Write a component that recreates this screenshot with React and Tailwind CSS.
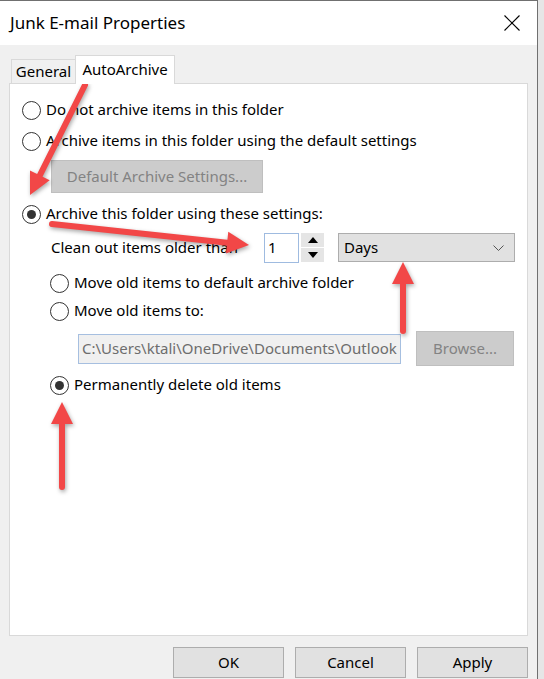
function Radio({ checked, label }) {
  return (
    <div className="flex items-center h-[20px]">
      <div className="w-[19px] h-[19px] rounded-full border border-[#333333] bg-white flex items-center justify-center shrink-0">
        {checked && <div className="w-[9px] h-[9px] rounded-full bg-[#333333]" />}
      </div>
      <span className="ml-[5px] leading-none whitespace-nowrap -mt-[2px]">{label}</span>
    </div>
  );
}

function Arrow({ x1, y1, x2, y2 }) {
  const dx = x2 - x1;
  const dy = y2 - y1;
  const len = Math.sqrt(dx * dx + dy * dy);
  const ux = dx / len;
  const uy = dy / len;
  const bx = x2 - ux * 22;
  const by = y2 - uy * 22;
  const px = -uy;
  const py = ux;
  const pts = `${x2},${y2} ${bx + px * 11},${by + py * 11} ${bx - px * 11},${by - py * 11}`;
  return (
    <g>
      <line x1={x1} y1={y1} x2={bx} y2={by} stroke="#f24747" strokeWidth="6" strokeLinecap="round" />
      <polygon points={pts} fill="#f24747" />
    </g>
  );
}

export default function App() {
  return (
    <div className="relative w-[544px] h-[679px] overflow-hidden bg-[#e6e6e6] font-['Segoe_UI','Noto_Sans',sans-serif] text-[15px] text-black">
      <div className="w-[538px] h-[680px] border-t border-r border-[#707070] bg-[#f0f0f0] flex flex-col">
        {/* title bar */}
        <div className="h-[44px] bg-white flex items-center justify-between pl-[10px] pr-[17px] shrink-0">
          <span className="text-[17px]">Junk E-mail Properties</span>
          <svg width="16" height="16" viewBox="0 0 16 16">
            <line x1="0.5" y1="0.5" x2="15.5" y2="15.5" stroke="#000" strokeWidth="1.1" />
            <line x1="15.5" y1="0.5" x2="0.5" y2="15.5" stroke="#000" strokeWidth="1.1" />
          </svg>
        </div>

        <div className="px-[9px] pt-[10px] flex flex-col">
          {/* tabs */}
          <div className="flex items-end h-[29px] ml-[2px] -mb-px relative z-10">
            <div className="h-[24px] mb-px w-[64px] border-t border-l border-[#d9d9d9] bg-[#f0f0f0] flex items-center justify-center">
              General
            </div>
            <div className="h-[29px] w-[100px] border-t border-l border-r border-[#d9d9d9] bg-white flex items-center justify-center pb-[2px]">
              AutoArchive
            </div>
          </div>

          {/* panel */}
          <div className="h-[553px] border border-[#d9d9d9] bg-white flex flex-col pt-[16px]">
            <div className="pl-[12px]">
              <Radio label="Do not archive items in this folder" />
            </div>
            <div className="pl-[12px] mt-[11px]">
              <Radio label="Archive items in this folder using the default settings" />
            </div>
            <div className="ml-[41px] mt-[9px] w-[212px] h-[33px] bg-[#cccccc] border border-[#bfbfbf] text-[#838383] flex items-center justify-center">
              Default Archive Settings...
            </div>
            <div className="pl-[12px] mt-[11px]">
              <Radio checked label="Archive this folder using these settings:" />
            </div>

            <div className="flex items-center mt-[8px] h-[31px] pl-[41px]">
              <span className="w-[213px] whitespace-nowrap">Clean out items older than</span>
              <div className="w-[35px] h-[30px] border border-[#9fbbe0] flex items-center pl-[3px]">1</div>
              <div className="ml-[2px] flex flex-col gap-[1px]">
                <div className="w-[23px] h-[14px] bg-[#e5e5e5] flex items-center justify-center">
                  <svg width="10" height="6" viewBox="0 0 10 6"><polygon points="5,0 10,6 0,6" fill="#000" /></svg>
                </div>
                <div className="w-[23px] h-[14px] bg-[#e5e5e5] flex items-center justify-center">
                  <svg width="10" height="6" viewBox="0 0 10 6"><polygon points="0,0 10,0 5,6" fill="#000" /></svg>
                </div>
              </div>
              <div className="ml-[14px] w-[177px] h-[29px] bg-[#e1e1e1] border border-[#adadad] flex items-center justify-between pl-[5px] pr-[10px]">
                <span>Days</span>
                <svg width="11" height="6" viewBox="0 0 11 6">
                  <polyline points="0.5,0.5 5.5,5.5 10.5,0.5" fill="none" stroke="#555" strokeWidth="1" />
                </svg>
              </div>
            </div>

            <div className="pl-[40px] mt-[10px]">
              <Radio label="Move old items to default archive folder" />
            </div>
            <div className="pl-[40px] mt-[8px]">
              <Radio label="Move old items to:" />
            </div>

            <div className="flex items-center mt-[10px] h-[35px] pl-[68px]">
              <div className="w-[323px] h-[30px] bg-[#f0f0f0] border border-[#a6bfe0] text-[#6d6d6d] flex items-center pl-[3px] overflow-hidden whitespace-nowrap">
                C:\Users\ktali\OneDrive\Documents\Outlook
              </div>
              <div className="ml-[15px] w-[98px] h-[35px] bg-[#cccccc] border border-[#bfbfbf] text-[#838383] flex items-center justify-center">
                Browse...
              </div>
            </div>

            <div className="pl-[40px] mt-[9px]">
              <Radio checked label="Permanently delete old items" />
            </div>
          </div>

          {/* buttons */}
          <div className="flex justify-end gap-[11px] mt-[11px]">
            <div className="w-[111px] h-[31px] bg-[#e1e1e1] border border-[#adadad] flex items-center justify-center">OK</div>
            <div className="w-[111px] h-[31px] bg-[#e1e1e1] border border-[#adadad] flex items-center justify-center">Cancel</div>
            <div className="w-[111px] h-[31px] bg-[#e1e1e1] border border-[#adadad] flex items-center justify-center">Apply</div>
          </div>
        </div>
      </div>

      {/* annotation arrows */}
      <svg
        className="absolute inset-0 pointer-events-none"
        width="544"
        height="679"
        style={{ filter: "drop-shadow(1px 2px 2px rgba(0,0,0,0.35))" }}
      >
        <Arrow x1={85} y1={85} x2={30} y2={195} />
        <Arrow x1={52} y1={224} x2={249} y2={245} />
        <Arrow x1={403} y1={331} x2={403} y2={262} />
        <Arrow x1={62} y1={487} x2={62} y2={402} />
      </svg>
    </div>
  );
}
